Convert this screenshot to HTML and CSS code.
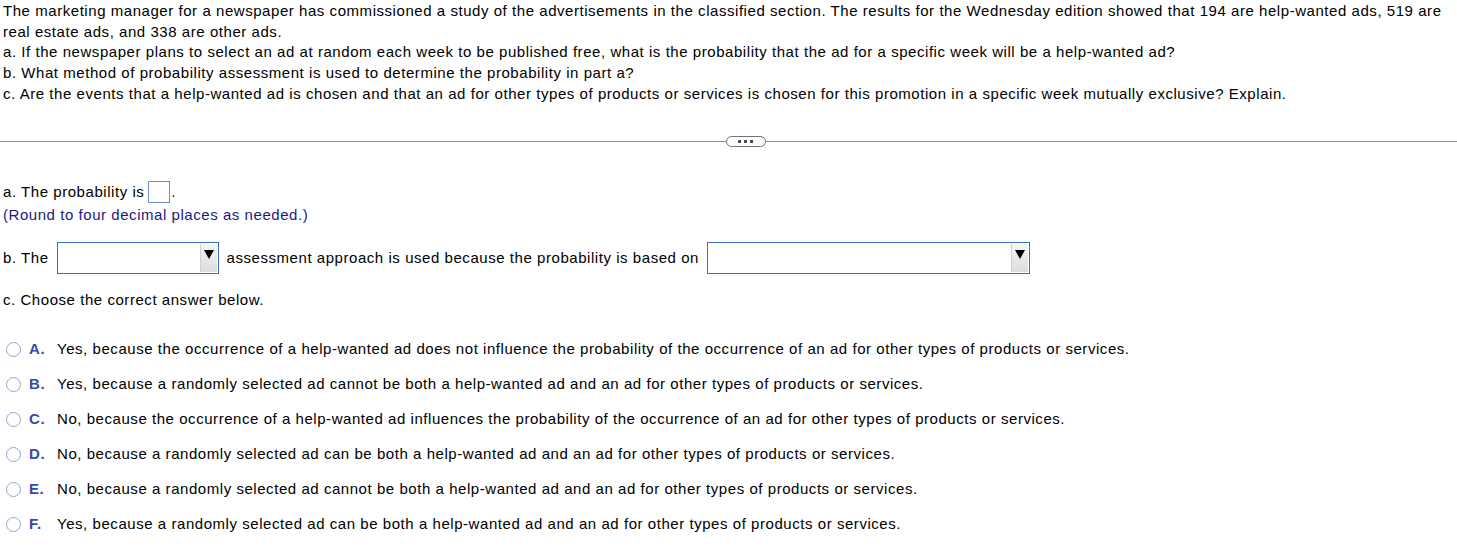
FILE: index.html
```html
<!DOCTYPE html>
<html>
<head>
<meta charset="utf-8">
<link rel="stylesheet" href="styles.css">
</head>
<body>
<div class="question">
  <p class="intro">The marketing manager for a newspaper has commissioned a study of the advertisements in the classified section. The results for the Wednesday edition showed that 194 are help-wanted ads, 519 are real estate ads, and 338 are other ads.</p>
  <p class="intro">a. If the newspaper plans to select an ad at random each week to be published free, what is the probability that the ad for a specific week will be a help-wanted ad?</p>
  <p class="intro">b. What method of probability assessment is used to determine the probability in part a?</p>
  <p class="intro">c. Are the events that a help-wanted ad is chosen and that an ad for other types of products or services is chosen for this promotion in a specific week mutually exclusive? Explain.</p>
</div>
<div class="divider"><span class="pill"><i></i><i></i><i></i></span></div>
<div class="answers">
  <div class="row-a">a. The probability is <span class="blank"></span>.</div>
  <div class="hint">(Round to four decimal places as needed.)</div>
  <div class="row-b">
    <span>b. The</span>
    <span class="select sel-1"><span class="arrow"><svg width="10" height="10" viewBox="0 0 10 10"><polygon points="0,1 10,1 5,10" fill="#000"/></svg></span></span>
    <span>assessment approach is used because the probability is based on</span>
    <span class="select sel-2"><span class="arrow"><svg width="10" height="10" viewBox="0 0 10 10"><polygon points="0,1 10,1 5,10" fill="#000"/></svg></span></span>
  </div>
  <div class="row-c">c. Choose the correct answer below.</div>
  <ul class="options">
    <li><span class="radio"></span><span class="letter">A.</span><span>Yes, because the occurrence of a help-wanted ad does not influence the probability of the occurrence of an ad for other types of products or services.</span></li>
    <li><span class="radio"></span><span class="letter">B.</span><span>Yes, because a randomly selected ad cannot be both a help-wanted ad and an ad for other types of products or services.</span></li>
    <li><span class="radio"></span><span class="letter">C.</span><span>No, because the occurrence of a help-wanted ad influences the probability of the occurrence of an ad for other types of products or services.</span></li>
    <li><span class="radio"></span><span class="letter">D.</span><span>No, because a randomly selected ad can be both a help-wanted ad and an ad for other types of products or services.</span></li>
    <li><span class="radio"></span><span class="letter">E.</span><span>No, because a randomly selected ad cannot be both a help-wanted ad and an ad for other types of products or services.</span></li>
    <li><span class="radio"></span><span class="letter">F.</span><span>Yes, because a randomly selected ad can be both a help-wanted ad and an ad for other types of products or services.</span></li>
  </ul>
</div>
</body>
</html>
```
FILE: styles.css
```css
html, body {
  margin: 0;
  padding: 0;
  background: #fff;
}
body {
  font-family: "Liberation Sans", Arial, sans-serif;
  font-size: 15px;
  letter-spacing: 0.55px;
  color: #000;
}
.question {
  padding: 1px 3px 0 3px;
}
.intro {
  margin: 0;
  line-height: 20.7px;
}
.divider {
  position: relative;
  margin-top: 31px;
  height: 11px;
  display: flex;
  align-items: center;
  justify-content: center;
}
.divider::before {
  content: "";
  position: absolute;
  left: 0;
  right: 0;
  top: 5px;
  height: 1px;
  background: #8e8e96;
}
.pill {
  position: relative;
  margin-left: 34px;
  width: 38px;
  height: 9px;
  border: 1px solid #6f7078;
  border-radius: 6px;
  background: #fff;
  display: flex;
  align-items: center;
  justify-content: center;
  gap: 3px;
}
.pill i {
  width: 3px;
  height: 3px;
  background: #4a4a55;
  display: block;
}
.answers {
  padding-left: 3px;
}
.row-a {
  margin-top: 34px;
  height: 22px;
  display: flex;
  align-items: center;
  line-height: 22px;
}
.blank {
  display: inline-block;
  width: 20px;
  height: 20px;
  border: 1px solid #6d8ecf;
  margin-left: 4px;
  margin-right: 1px;
}
.hint {
  color: #1a1a80;
  margin-top: 3px;
  line-height: 18px;
}
.row-b {
  margin-top: 18px;
  display: flex;
  align-items: center;
  gap: 8px;
  height: 32px;
}
.select {
  display: inline-flex;
  justify-content: flex-end;
  align-items: stretch;
  height: 32px;
  box-sizing: border-box;
  border: 1px solid #3f6cc6;
  background: #fff;
  padding: 1px;
}
.sel-1 { width: 162px; }
.sel-2 { width: 323px; }
.arrow {
  width: 17px;
  background: linear-gradient(#f6f6f6, #dcdcdc);
  border-left: 1px solid #d0d0d0;
  display: flex;
  justify-content: center;
  align-items: flex-start;
  padding-top: 5px;
  box-sizing: border-box;
}
.row-c {
  margin-top: 17px;
  line-height: 18px;
}
.options {
  list-style: none;
  margin: 23px 0 0 0;
  padding: 0;
}
.options li {
  display: flex;
  align-items: center;
  height: 35px;
  line-height: 18px;
}
.radio {
  width: 13px;
  height: 13px;
  border: 1.5px solid #97a2d4;
  border-radius: 50%;
  margin-left: 3px;
  margin-right: 8px;
  flex: none;
}
.letter {
  color: #3c48a8;
  font-weight: bold;
  width: 28px;
  flex: none;
}
```
